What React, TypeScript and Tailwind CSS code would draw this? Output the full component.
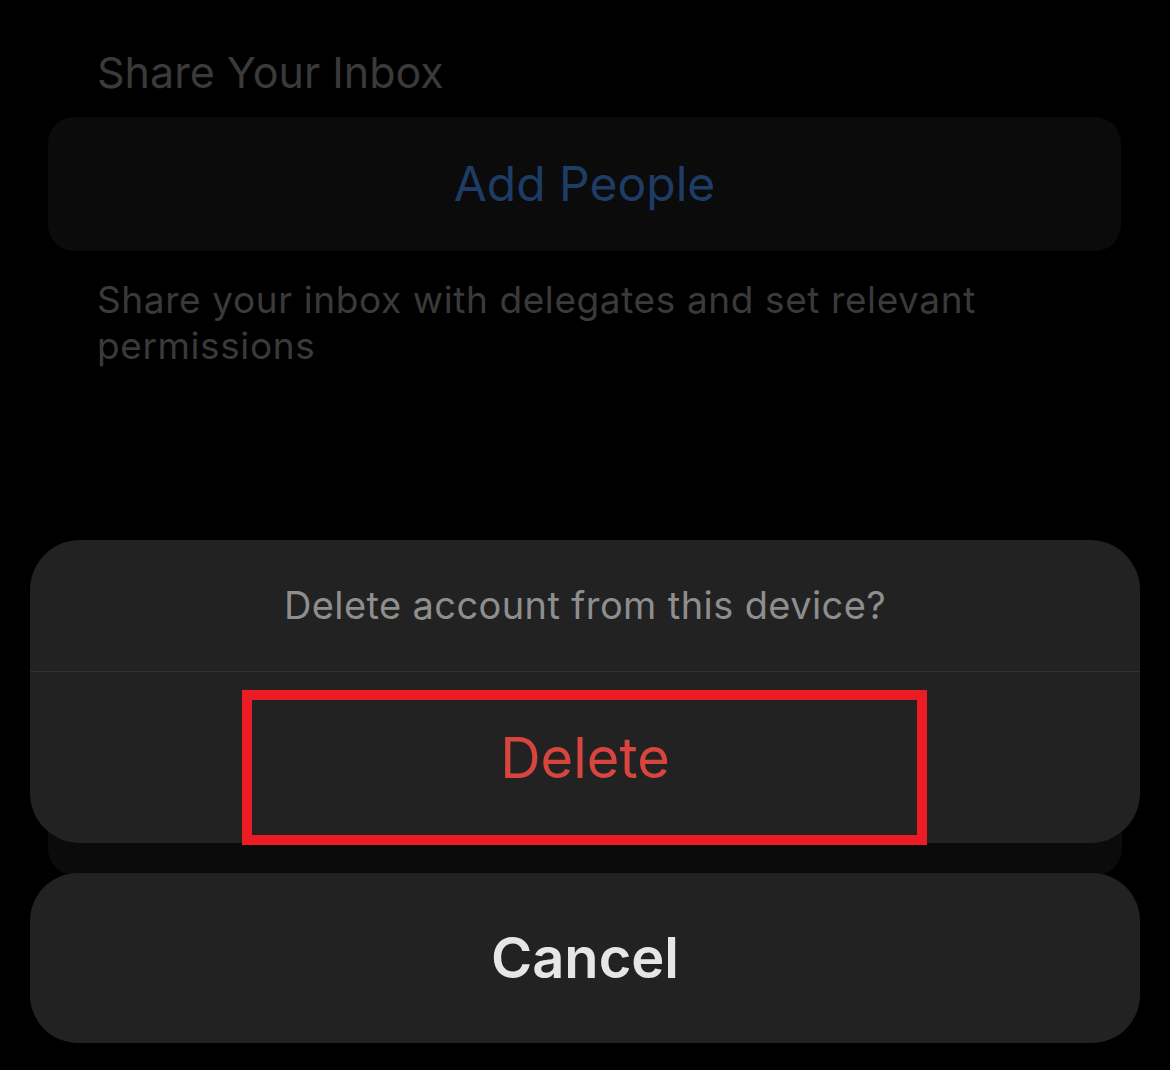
export default function App() {
  return (
    <div className="relative h-[1070px] w-[1170px] overflow-hidden bg-black font-['Inter','Roboto',sans-serif]">
      {/* page content behind the sheet */}
      <div className="flex flex-col">
        <h2 className="pl-[97px] pt-[47px] text-[43px] leading-[50px] text-[#3a3a3a]">Share Your Inbox</h2>
        <div className="ml-[48px] mr-[49px] mt-[20px] flex h-[134px] items-center justify-center rounded-[26px] bg-[#0b0b0b]">
          <span className="text-[48px] text-[#1d3c66]">Add People</span>
        </div>
        <p className="mt-[26px] pl-[97px] pr-[120px] text-[37px] leading-[46px] tracking-[0.6px] text-[#3a3a3a]">
          Share your inbox with delegates and set relevant permissions
        </p>
        <div className="ml-[48px] mr-[48px] mt-[190px] h-[316px] rounded-[26px] bg-[#0b0b0b]" />
      </div>

      {/* action sheet */}
      <div className="absolute inset-0 flex flex-col justify-end gap-[30px] px-[30px] pb-[27px]">
        <div className="relative flex h-[303px] flex-col rounded-[50px] bg-[#222222]">
          <div className="flex h-[131px] items-center justify-center">
            <span className="text-[38px] tracking-[0.4px] text-[#8e8e8e]">Delete account from this device?</span>
          </div>
          <div className="h-px bg-[#303030]" />
          <button className="flex flex-1 items-center justify-center">
            <span className="text-[56px] text-[#d8453f]">Delete</span>
          </button>
          <div className="absolute left-[212px] top-[150px] h-[155px] w-[685px] border-[10px] border-[#ed1c24]" />
        </div>
        <button className="flex h-[170px] items-center justify-center rounded-[48px] bg-[#222222]">
          <span className="text-[56px] font-semibold text-[#e6e6e6]">Cancel</span>
        </button>
      </div>
    </div>
  );
}
